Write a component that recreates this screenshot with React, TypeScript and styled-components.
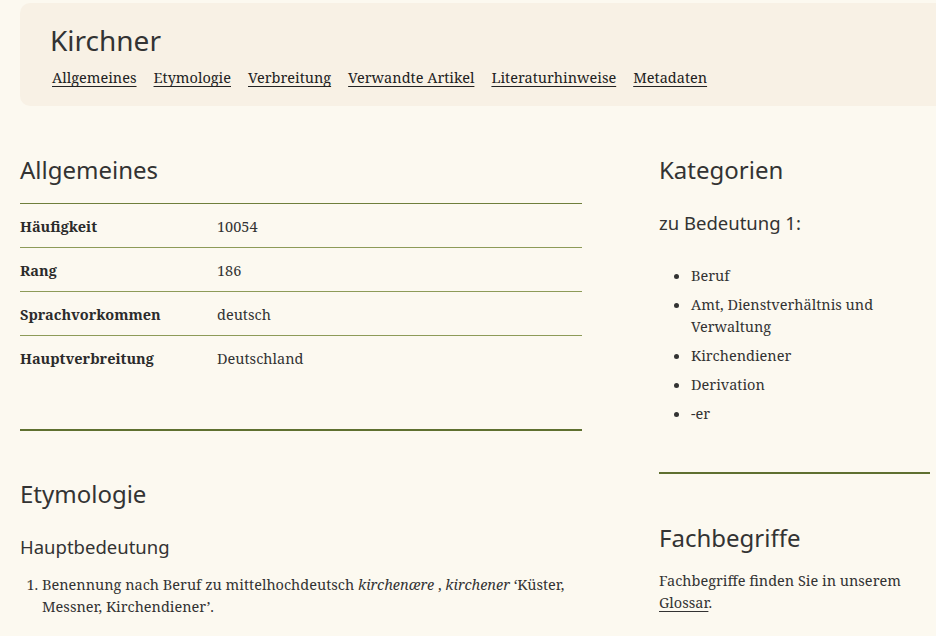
import React from 'react'
import styled, {createGlobalStyle} from 'styled-components'

const GlobalStyle = createGlobalStyle`
  html, body {
    margin: 0;
    padding: 0;
    background: #fcf9f0;
    overflow: hidden;
  }
  body {
    font-family: "Noto Serif", "DejaVu Serif Condensed", "DejaVu Serif", serif;
    color: #333;
  }
`

const sans = `"Noto Sans", "Open Sans", sans-serif`
const serif = `"Noto Serif", "DejaVu Serif Condensed", "DejaVu Serif", serif`

const Page = styled.div`
  width: 1000px;
  padding: 3px 0 0 20px;
  box-sizing: border-box;
`

const Header = styled.header`
  background: #f8f1e5;
  border-radius: 10px;
  padding: 21px 30px 19px;
  height: 103px;
  box-sizing: border-box;
`

const Title = styled.h1`
  margin: 0;
  font-family: ${sans};
  font-weight: 400;
  font-size: 28px;
  line-height: 32px;
  color: #333;
`

const Nav = styled.nav`
  display: flex;
  gap: 17px;
  margin-top: 11px;
  padding-left: 2px;
`

const NavLink = styled.a`
  font-family: ${serif};
  font-size: 14.5px;
  color: #222;
  text-decoration: underline;
  text-underline-offset: 3px;
  cursor: pointer;
`

const Columns = styled.div`
  display: flex;
  gap: 77px;
  margin-top: 48px;
`

const Main = styled.main`
  width: 562px;
`

const Aside = styled.aside`
  width: 271px;
`

const H2 = styled.h2`
  margin: 0;
  font-family: ${sans};
  font-weight: 400;
  font-size: 24px;
  line-height: 32px;
  color: #333;
`

const H3 = styled.h3`
  margin: 0;
  font-family: ${sans};
  font-weight: 400;
  font-size: 18.5px;
  line-height: 26px;
  color: #333;
`

const Table = styled.table`
  width: 100%;
  border-collapse: collapse;
  margin-top: 17px;
  border-top: 1px solid #6f7f3c;
  font-family: ${serif};
  font-size: 14.5px;
`

const Row = styled.tr`
  border-bottom: 1px solid #8d9b58;
  &:last-child {
    border-bottom: none;
  }
`

const Label = styled.th`
  text-align: left;
  font-weight: 700;
  width: 197px;
  height: 43px;
  padding: 0;
  color: #2b2b2b;
`

const Value = styled.td`
  padding: 0;
  color: #333;
`

const ThickRule = styled.hr<{$top: number}>`
  border: none;
  height: 2px;
  background: #5f7030;
  margin: ${({$top}) => $top}px 0 0;
`

const Section = styled.section<{$top: number}>`
  margin-top: ${({$top}) => $top}px;
`

const OList = styled.ol`
  margin: 13px 0 0;
  padding-left: 22px;
  font-family: ${serif};
  font-size: 14.5px;
  line-height: 22px;
  color: #333;
`

const Em = styled.i``

const UList = styled.ul`
  margin: 28px 0 0;
  padding-left: 32px;
  font-family: ${serif};
  font-size: 14.5px;
  line-height: 22px;
  color: #333;
  li {
    margin-bottom: 7px;
  }
`

const Paragraph = styled.p`
  margin: 15px 0 0;
  font-family: ${serif};
  font-size: 14.5px;
  line-height: 22px;
  color: #333;
`

const TextLink = styled.a`
  color: #333;
  text-decoration: underline;
  text-underline-offset: 3px;
`

const navItems = ['Allgemeines', 'Etymologie', 'Verbreitung', 'Verwandte Artikel', 'Literaturhinweise', 'Metadaten']

const rows = [
  ['Häufigkeit', '10054'],
  ['Rang', '186'],
  ['Sprachvorkommen', 'deutsch'],
  ['Hauptverbreitung', 'Deutschland'],
]

const categories = ['Beruf', 'Amt, Dienstverhältnis und Verwaltung', 'Kirchendiener', 'Derivation', '-er']

export default function App() {
  return (
    <>
      <GlobalStyle />
      <Page>
        <Header>
          <Title>Kirchner</Title>
          <Nav>
            {navItems.map((item) => (
              <NavLink key={item}>{item}</NavLink>
            ))}
          </Nav>
        </Header>

        <Columns>
          <Main>
            <H2>Allgemeines</H2>
            <Table>
              <tbody>
                {rows.map(([label, value]) => (
                  <Row key={label}>
                    <Label>{label}</Label>
                    <Value>{value}</Value>
                  </Row>
                ))}
              </tbody>
            </Table>
            <ThickRule $top={50} />

            <Section $top={47}>
              <H2>Etymologie</H2>
              <Section $top={24}>
                <H3>Hauptbedeutung</H3>
                <OList>
                  <li>
                    Benennung nach Beruf zu mittelhochdeutsch <Em>kirchenære</Em> , <Em>kirchener</Em> ‘Küster,
                    Messner, Kirchendiener’.
                  </li>
                </OList>
              </Section>
            </Section>
          </Main>

          <Aside>
            <H2>Kategorien</H2>
            <Section $top={24}>
              <H3>zu Bedeutung 1:</H3>
              <UList>
                {categories.map((c) => (
                  <li key={c}>{c}</li>
                ))}
              </UList>
            </Section>
            <ThickRule $top={48} />
            <Section $top={48}>
              <H2>Fachbegriffe</H2>
              <Paragraph>
                Fachbegriffe finden Sie in unserem <TextLink>Glossar</TextLink>.
              </Paragraph>
            </Section>
          </Aside>
        </Columns>
      </Page>
    </>
  )
}
